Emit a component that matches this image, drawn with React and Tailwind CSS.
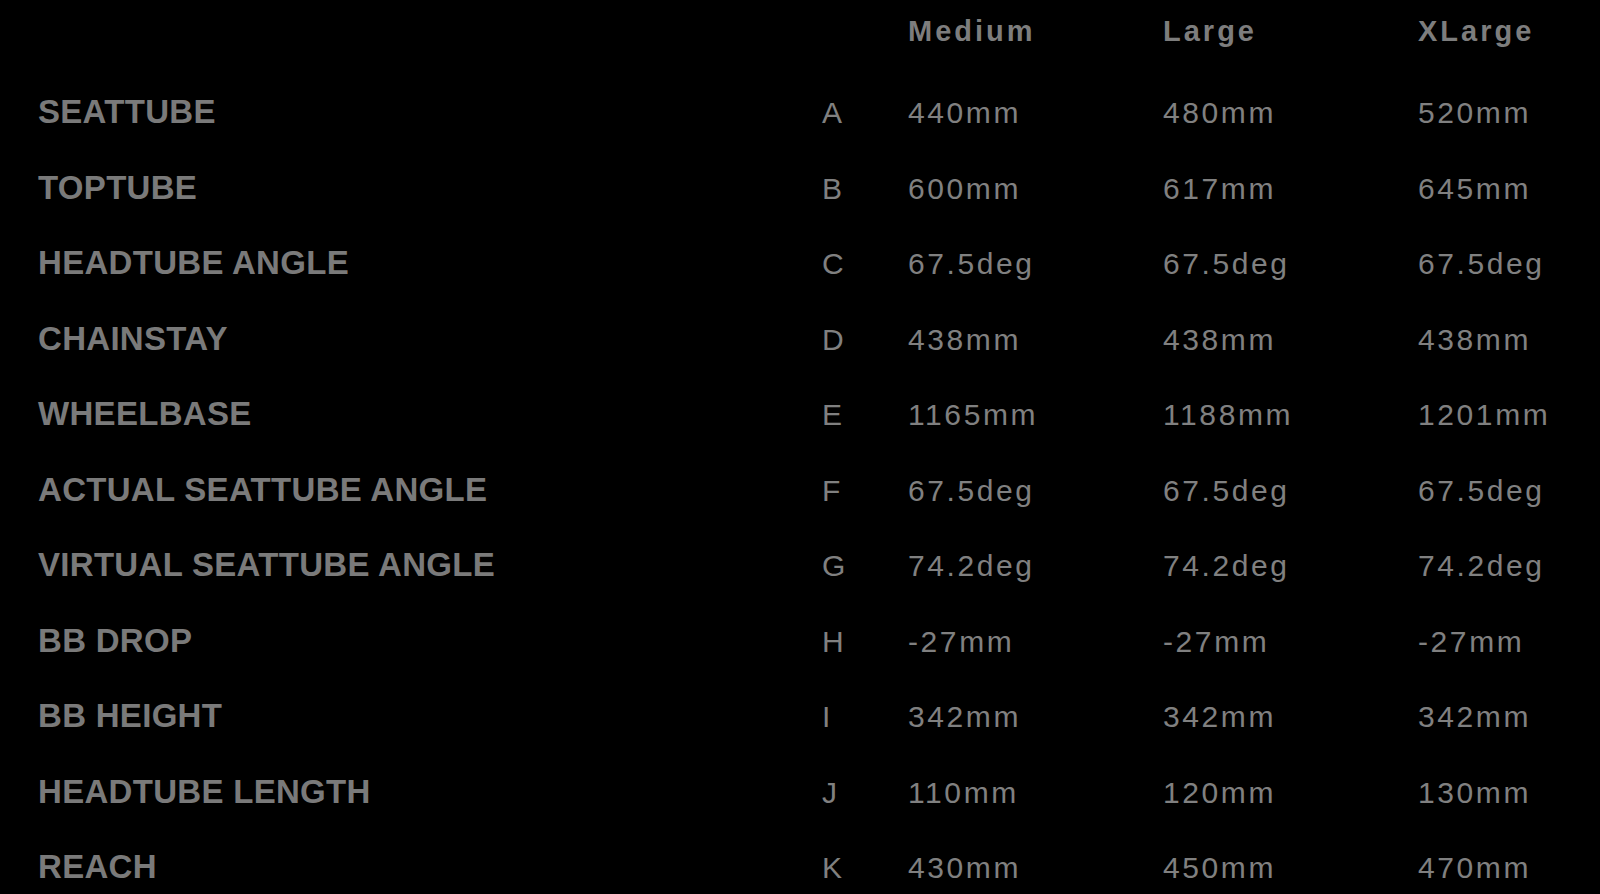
import React from "react";

const rows = [
  ["SEATTUBE", "A", "440mm", "480mm", "520mm"],
  ["TOPTUBE", "B", "600mm", "617mm", "645mm"],
  ["HEADTUBE ANGLE", "C", "67.5deg", "67.5deg", "67.5deg"],
  ["CHAINSTAY", "D", "438mm", "438mm", "438mm"],
  ["WHEELBASE", "E", "1165mm", "1188mm", "1201mm"],
  ["ACTUAL SEATTUBE ANGLE", "F", "67.5deg", "67.5deg", "67.5deg"],
  ["VIRTUAL SEATTUBE ANGLE", "G", "74.2deg", "74.2deg", "74.2deg"],
  ["BB DROP", "H", "-27mm", "-27mm", "-27mm"],
  ["BB HEIGHT", "I", "342mm", "342mm", "342mm"],
  ["HEADTUBE LENGTH", "J", "110mm", "120mm", "130mm"],
  ["REACH", "K", "430mm", "450mm", "470mm"],
];

const grid = "grid grid-cols-[784px_86px_255px_255px_255px]";

export default function App() {
  return (
    <div
      className="h-screen w-full overflow-hidden bg-black pl-[38px]"
      style={{ fontFamily: '"Liberation Sans", Arial, Helvetica, sans-serif' }}
    >
      <div className={`${grid} h-[74.25px] items-baseline`}>
        <div />
        <div />
        {["Medium", "Large", "XLarge"].map((h) => (
          <div
            key={h}
            className="text-[29px] font-bold leading-[62px] tracking-[3px] text-[#7d7d7d]"
          >
            {h}
          </div>
        ))}
      </div>
      {rows.map((r) => (
        <div key={r[0]} className={`${grid} h-[75.5px] items-baseline`}>
          <div className="text-[33px] font-bold leading-[75.5px] tracking-[0.3px] text-[#7a7a7a]">
            {r[0]}
          </div>
          {r.slice(1).map((v, i) => (
            <div
              key={i}
              className="text-[30px] font-normal leading-[75.5px] tracking-[2.6px] text-[#808080]"
            >
              {v}
            </div>
          ))}
        </div>
      ))}
    </div>
  );
}
